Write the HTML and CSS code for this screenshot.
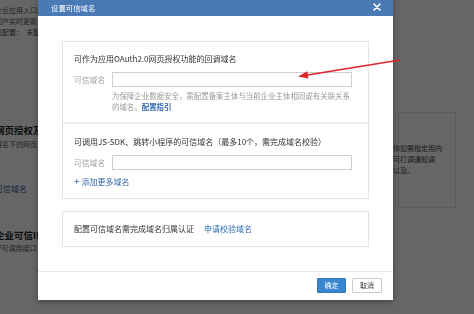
FILE: index.html
```html
<!DOCTYPE html>
<html lang="zh">
<head>
<meta charset="utf-8">
<title>设置可信域名</title>
<link rel="stylesheet" href="styles.css">
</head>
<body>
<div class="page">
  <div class="page-left">
    <div class="bg-line first">企业应用入口展</div>
    <div class="bg-line">门户实时更新</div>
    <div class="bg-line">已配置：&nbsp;&nbsp;未配置</div>
    <div class="bg-head h1">网页授权及</div>
    <div class="bg-line sub">域名下的网页</div>
    <div class="bg-link">可信域名</div>
    <div class="bg-head h2">企业可信IP</div>
    <div class="bg-line sub2">IP可调用接口</div>
  </div>
  <div class="page-right">
    <div class="bg-box">
      <div class="bg-text">你如需指定用内</div>
      <div class="bg-text">可打调通知调</div>
      <div class="bg-text">以及。</div>
    </div>
  </div>
</div>

<div class="overlay"></div>

<div class="dialog">
  <div class="dialog-header">
    <span class="dialog-title">设置可信域名</span>
    <svg class="close" width="8" height="8" viewBox="0 0 8 8"><path d="M1 1L7 7M7 1L1 7" stroke="#fff" stroke-width="1.6" stroke-linecap="round"/></svg>
  </div>
  <div class="dialog-body">
    <div class="card">
      <div class="section">
        <div class="sec-title">可作为应用OAuth2.0网页授权功能的回调域名</div>
        <div class="form-row">
          <span class="label">可信域名</span>
          <span class="input"></span>
        </div>
        <div class="hint">为保障企业数据安全，需配置备案主体与当前企业主体相同或有关联关系的域名。<a class="link strong">配置指引</a></div>
      </div>
      <div class="section second">
        <div class="sec-title">可调用JS-SDK、跳转小程序的可信域名（最多10个，需完成域名校验）</div>
        <div class="form-row">
          <span class="label">可信域名</span>
          <span class="input"></span>
        </div>
        <div class="add-more"><span class="plus">+</span>添加更多域名</div>
      </div>
    </div>
    <div class="card card-note">
      <div class="section note">
        <span>配置可信域名需完成域名归属认证</span>
        <a class="link">申请校验域名</a>
      </div>
    </div>
  </div>
  <div class="dialog-footer">
    <span class="btn primary">确定</span>
    <span class="btn">取消</span>
  </div>
</div>

<svg class="arrow" width="474" height="314" viewBox="0 0 474 314">
  <line x1="306" y1="75.2" x2="400" y2="60" stroke="#e0232b" stroke-width="1.5"/>
  <polygon points="298,76.6 308.4,78.6 307.3,71.3" fill="#e0232b"/>
</svg>
</body>
</html>
```

FILE: styles.css
```css
html, body {
  margin: 0;
  padding: 0;
  width: 474px;
  height: 314px;
  overflow: hidden;
  font-family: "Noto Sans CJK SC", "Noto Sans", sans-serif;
}

.page {
  display: flex;
  justify-content: space-between;
  height: 314px;
  background: #fff;
  color: #333;
}

.page-left {
  margin-left: -5px;
  width: 140px;
  font-size: 7px;
  white-space: nowrap;
}

.bg-line {
  line-height: 11px;
  color: #555;
}

.bg-line.first {
  margin-top: 4px;
  line-height: 12px;
}

.bg-head {
  font-size: 9.5px;
  font-weight: bold;
  line-height: 14px;
  color: #222;
}

.bg-head.h1 { margin-top: 85px; }
.bg-head.h2 { margin-top: 32px; }

.bg-line.sub { line-height: 14px; }
.bg-line.sub2 { line-height: 12px; }

.bg-link {
  margin-top: 31px;
  line-height: 14px;
  font-size: 8px;
  color: #2f66a8;
}

.page-right {
  width: 94px;
  display: flex;
  justify-content: flex-end;
}

.bg-box {
  margin-top: 112px;
  margin-right: 18px;
  width: 56px;
  height: 94px;
  border: 1px solid #e6e6e6;
  font-size: 7px;
  white-space: nowrap;
}

.bg-text {
  margin-left: -6px;
  line-height: 11px;
  color: #444;
}

.bg-text:first-child { margin-top: 30px; }

.overlay {
  position: fixed;
  inset: 0;
  background: rgba(0, 0, 0, 0.6);
}

.dialog {
  position: absolute;
  left: 38px;
  top: -2px;
  width: 355px;
  background: #fff;
  box-shadow: 0 2px 6px rgba(0, 0, 0, 0.35);
  color: #333;
}

.dialog-header {
  height: 18px;
  background: #4a7ab6;
  display: flex;
  align-items: center;
  justify-content: space-between;
  padding: 0 12px 0 13px;
  color: #fff;
}

.dialog-title {
  font-size: 7.4px;
  line-height: 10px;
  margin-top: 1px;
}

.close {
  display: block;
  margin-top: -1px;
}

.dialog-body {
  padding: 25px 24px 24px;
}

.card {
  border: 1px solid #e4e4e4;
  background: #fff;
}

.section {
  padding: 11px 15px 10px 11px;
}

.section.second {
  border-top: 2px solid #eeeeee;
  padding-top: 12px;
}

.sec-title {
  font-size: 8px;
  line-height: 12px;
  white-space: nowrap;
}

.form-row {
  display: flex;
  align-items: center;
  margin-top: 7px;
  margin-right: 1px;
}

.label {
  width: 38px;
  flex: none;
  font-size: 7.8px;
  color: #a3a3a3;
}

.input {
  flex: 1;
  height: 13px;
  border: 1px solid #cfcfcf;
  background: #fff;
}

.hint {
  margin-top: 3px;
  margin-left: 38px;
  font-size: 7.45px;
  line-height: 11px;
  color: #9a9a9a;
}

.link {
  color: #2f6cb0;
  text-decoration: none;
}

.link.strong {
  font-weight: bold;
  color: #2a64a8;
}

.add-more {
  margin-top: 5px;
  font-size: 8px;
  line-height: 12px;
  color: #2f67a9;
}

.plus {
  font-size: 10px;
  margin-right: 2px;
}

.card-note {
  margin-top: 12px;
}

.section.note {
  display: flex;
  align-items: center;
  gap: 10px;
  padding-top: 11px;
  padding-bottom: 11px;
  font-size: 8px;
  line-height: 12px;
}

.dialog-footer {
  border-top: 1px solid #e6e6e6;
  display: flex;
  justify-content: flex-end;
  gap: 6px;
  padding: 6px 11px 7px;
}

.btn {
  height: 13px;
  width: 28px;
  border: 1px solid #cccccc;
  border-radius: 1px;
  background: #fff;
  color: #333;
  font-size: 7px;
  line-height: 13px;
  text-align: center;
}

.btn.primary {
  width: 27px;
  background: #3a87d0;
  border-color: #3479bd;
  color: #fff;
}

.arrow {
  position: absolute;
  left: 0;
  top: 0;
  pointer-events: none;
}
```
